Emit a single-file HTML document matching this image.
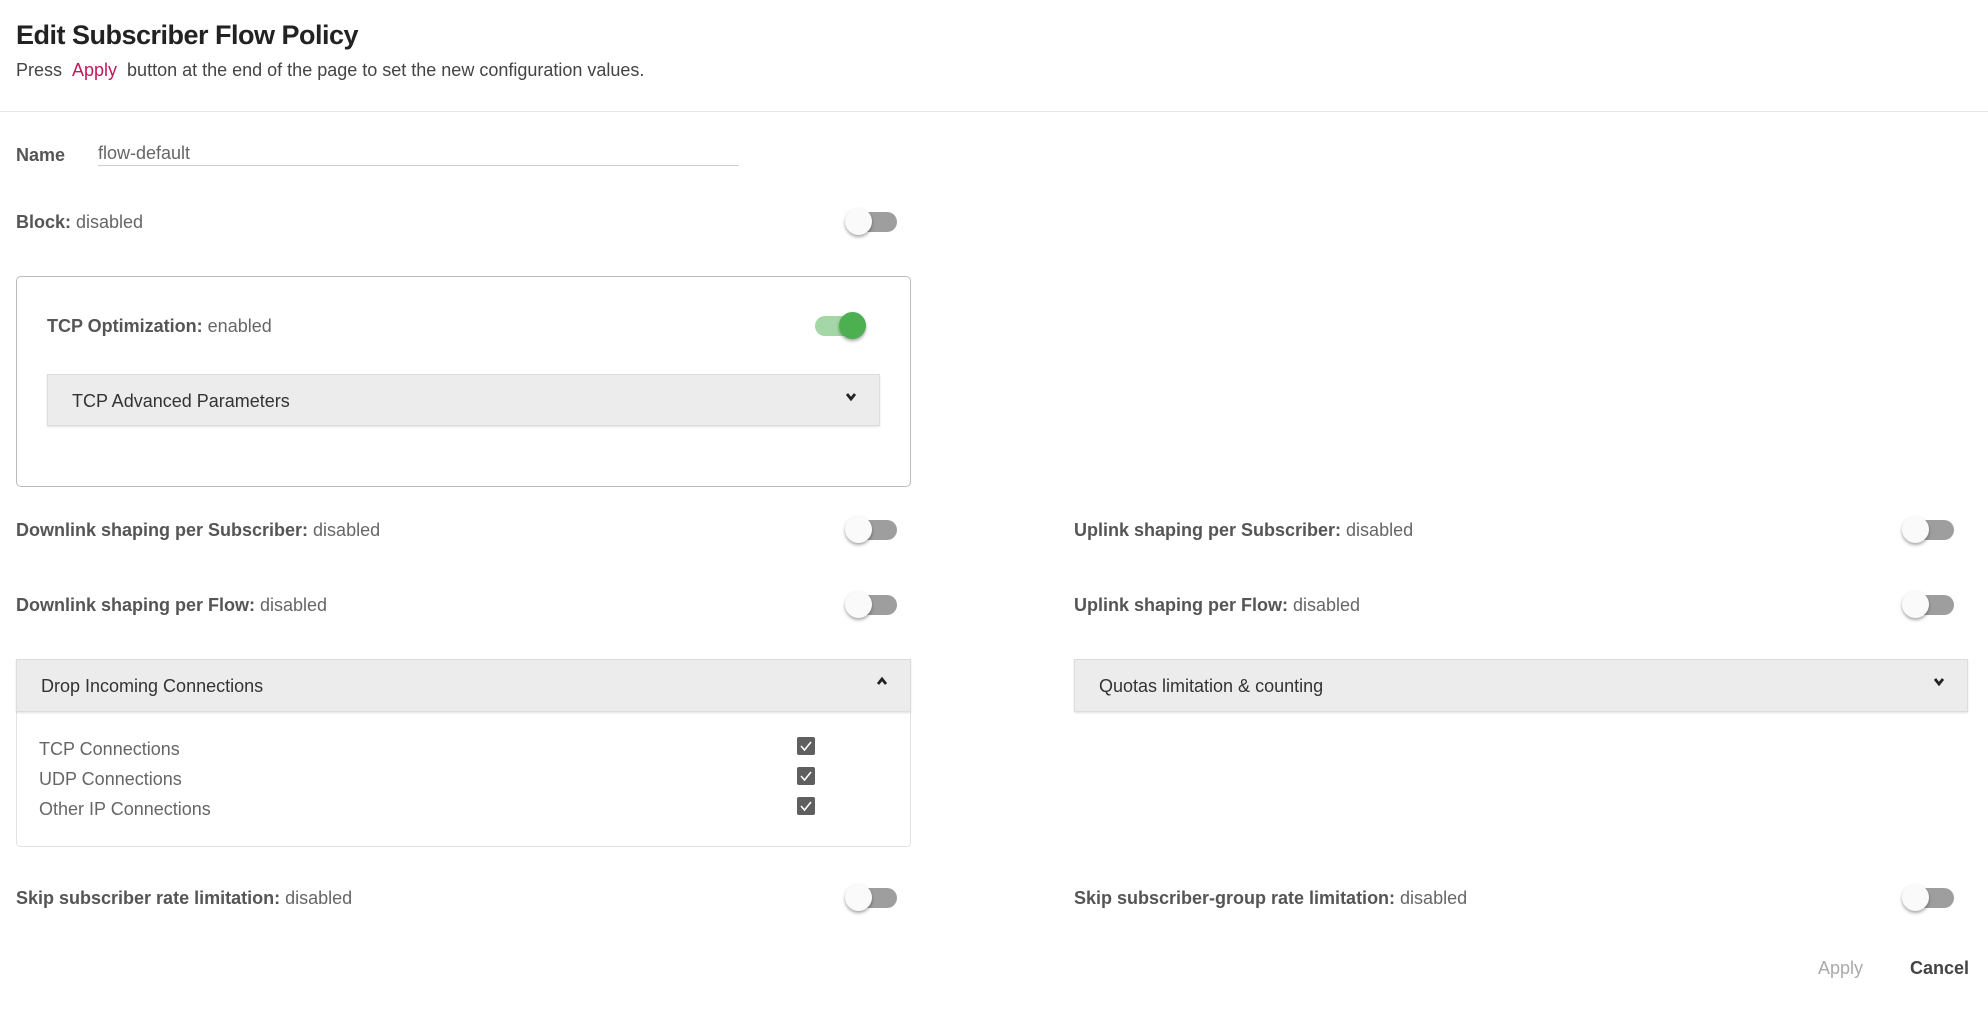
<!DOCTYPE html>
<html><head><meta charset="utf-8"><style>
*{box-sizing:border-box;margin:0;padding:0}
body{width:1988px;height:1011px;background:#fff;font-family:"Liberation Sans",sans-serif;color:#555;position:relative;overflow:hidden}
.a{position:absolute;white-space:nowrap}
.lbl{font-size:18px;line-height:22px;color:#666}
.lbl b{color:#555}
.tg{position:absolute;width:54px;height:28px}
.tg .tr{position:absolute;left:6px;top:5px;width:46px;height:20px;border-radius:10px;background:#9e9e9e}
.tg .kn{position:absolute;left:0;top:1px;width:27px;height:27px;border-radius:50%;background:#fafafa;box-shadow:0 2px 3px rgba(0,0,0,.35)}
.tg.on .tr{background:#a5d6a7;left:0}
.tg.on .kn{left:24px;background:#4caf50}
.ph{position:absolute;background:#ececec;border:1px solid #ddd;box-shadow:0 1px 2px rgba(0,0,0,.12)}
.ph span{position:absolute;left:24px;top:1px;line-height:50px;font-size:18px;color:#333}
.cb{position:absolute;width:18px;height:18px;background:#5f5f5f;border-radius:2px}
</style></head><body>
<div class="a" style="left:16px;top:20px;font-size:27px;color:#222;font-weight:bold;letter-spacing:-0.5px">Edit Subscriber Flow Policy</div>
<div class="a" style="left:16px;top:60px;font-size:18px;color:#444">Press &nbsp;<span style="color:#c2185b">Apply</span>&nbsp; button at the end of the page to set the new configuration values.</div>
<div class="a" style="left:0;top:111px;width:1988px;height:1px;background:#e6e6e6"></div>

<div class="a lbl" style="left:16px;top:144px"><b>Name</b></div>
<div class="a" style="left:98px;top:143px;font-size:18px;color:#666">flow-default</div>
<div class="a" style="left:98px;top:165px;width:641px;height:1px;background:#ccc"></div>

<div class="a lbl" style="left:16px;top:211px"><b>Block:</b> disabled</div>
<div class="tg" style="left:845px;top:207px"><div class="tr"></div><div class="kn"></div></div>

<div class="a" style="left:16px;top:276px;width:895px;height:211px;border:1px solid #bbb;border-radius:5px"></div>
<div class="a lbl" style="left:47px;top:315px"><b>TCP Optimization:</b> enabled</div>
<div class="tg on" style="left:815px;top:311px"><div class="tr"></div><div class="kn"></div></div>
<div class="ph" style="left:47px;top:374px;width:833px;height:52px"><span>TCP Advanced Parameters</span>
<svg style="position:absolute;right:22px;top:17px" width="12" height="10" viewBox="0 0 12 10"><path d="M2 2 L6 7 L10 2" stroke="#222" stroke-width="2.8" fill="none"/></svg></div>

<div class="a lbl" style="left:16px;top:519px"><b>Downlink shaping per Subscriber:</b> disabled</div>
<div class="tg" style="left:845px;top:515px"><div class="tr"></div><div class="kn"></div></div>
<div class="a lbl" style="left:1074px;top:519px"><b>Uplink shaping per Subscriber:</b> disabled</div>
<div class="tg" style="left:1902px;top:515px"><div class="tr"></div><div class="kn"></div></div>

<div class="a lbl" style="left:16px;top:594px"><b>Downlink shaping per Flow:</b> disabled</div>
<div class="tg" style="left:845px;top:590px"><div class="tr"></div><div class="kn"></div></div>
<div class="a lbl" style="left:1074px;top:594px"><b>Uplink shaping per Flow:</b> disabled</div>
<div class="tg" style="left:1902px;top:590px"><div class="tr"></div><div class="kn"></div></div>

<div class="a" style="left:16px;top:659px;width:895px;height:188px;border:1px solid #e3e3e3;border-radius:4px"></div>
<div class="ph" style="left:16px;top:659px;width:895px;height:53px"><span>Drop Incoming Connections</span>
<svg style="position:absolute;right:22px;top:16px" width="12" height="10" viewBox="0 0 12 10"><path d="M2 8 L6 3 L10 8" stroke="#222" stroke-width="2.8" fill="none"/></svg></div>
<div class="a" style="left:39px;top:739px;font-size:18px;color:#666">TCP Connections</div>
<div class="a" style="left:39px;top:769px;font-size:18px;color:#666">UDP Connections</div>
<div class="a" style="left:39px;top:799px;font-size:18px;color:#666">Other IP Connections</div>
<div class="cb" style="left:797px;top:737px"><svg width="18" height="18"><path d="M4 9 L7.5 13 L14 5" stroke="#fff" stroke-width="1.6" fill="none"/></svg></div>
<div class="cb" style="left:797px;top:767px"><svg width="18" height="18"><path d="M4 9 L7.5 13 L14 5" stroke="#fff" stroke-width="1.6" fill="none"/></svg></div>
<div class="cb" style="left:797px;top:797px"><svg width="18" height="18"><path d="M4 9 L7.5 13 L14 5" stroke="#fff" stroke-width="1.6" fill="none"/></svg></div>

<div class="ph" style="left:1074px;top:659px;width:894px;height:53px"><span>Quotas limitation &amp; counting</span>
<svg style="position:absolute;right:22px;top:17px" width="12" height="10" viewBox="0 0 12 10"><path d="M2 2 L6 7 L10 2" stroke="#222" stroke-width="2.8" fill="none"/></svg></div>

<div class="a lbl" style="left:16px;top:887px"><b>Skip subscriber rate limitation:</b> disabled</div>
<div class="tg" style="left:845px;top:883px"><div class="tr"></div><div class="kn"></div></div>
<div class="a lbl" style="left:1074px;top:887px"><b>Skip subscriber-group rate limitation:</b> disabled</div>
<div class="tg" style="left:1902px;top:883px"><div class="tr"></div><div class="kn"></div></div>

<div class="a" style="left:1818px;top:958px;font-size:18px;color:#aaa">Apply</div>
<div class="a" style="left:1910px;top:958px;font-size:18px;color:#444;font-weight:bold">Cancel</div>
</body></html>
